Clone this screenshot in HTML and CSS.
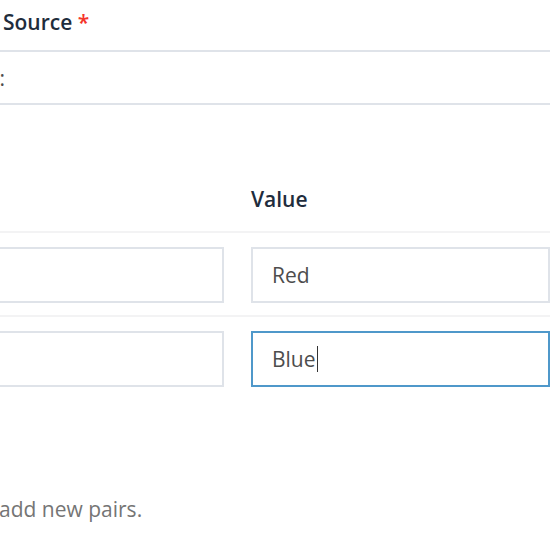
FILE: index.html
```html
<!DOCTYPE html>
<html lang="en">
<head>
  <meta charset="UTF-8">
  <meta name="viewport" content="width=device-width, initial-scale=1.0">
  <title>Source pairs</title>
  <link rel="stylesheet" href="styles.css">
</head>
<body>

  <form class="form">
    <div class="field">
      <label class="label" for="source">Source <span class="req">*</span></label>
      <input class="input source-input" id="source" type="text" value="Static:">
    </div>

    <div class="pairs">
      <div class="pairs-head">
        <div></div>
        <div>Value</div>
      </div>
      <div class="pair-row">
        <input class="input" type="text" value="">
        <input class="input" type="text" value="Red">
      </div>
      <div class="pair-row">
        <input class="input" type="text" value="">
        <!-- focused field, caret drawn so it shows in the capture -->
        <div class="input is-focused"><span>Blue</span><span class="caret"></span></div>
      </div>
    </div>

    <p class="hint">add new pairs.</p>
  </form>

</body>
</html>
```

FILE: styles.css
```css
* {
  box-sizing: border-box;
  margin: 0;
  padding: 0;
}

body {
  overflow: hidden;
  height: 100vh;
  background-color: #fff;
  font-family: "Open Sans", "Liberation Sans", sans-serif;
  font-size: 21px;
  color: #1f2d3d;
}

.form {
  padding-top: 8px;
}

.label {
  display: block;
  padding-left: 3px;
  line-height: 29px;
  font-weight: 600;
}

.req {
  color: #f5352b;
}

.input {
  display: block;
  height: 55px;
  padding: 0 19px;
  border: 2px solid #dfe3e9;
  border-radius: 0;
  background-color: #fff;
  font-family: inherit;
  font-size: 21px;
  font-weight: 500;
  color: #4d4d4d;
  outline: none;
}

.is-focused {
  display: flex;
  align-items: center;
  border-color: #4f98ca;
}

.caret {
  width: 1px;
  height: 26px;
  margin-left: 1px;
  background-color: #333;
}

.source-input {
  width: 640px;
  margin: 13px 0 0 -75px;
}

.pairs {
  width: 640px;
  margin: 80px 0 0 -75px;
}

.pairs-head,
.pair-row {
  display: grid;
  grid-template-columns: 299px 299px;
  column-gap: 27px;
}

.pairs-head {
  padding-bottom: 17px;
  line-height: 29px;
  font-weight: 600;
}

.pair-row {
  padding: 14px 0 12px;
  border-top: 2px solid #f3f3f4;
}

.pair-row .input {
  width: 100%;
  height: 56px;
}

.hint {
  margin: 96px 0 0 -1px;
  line-height: 29px;
  font-weight: 500;
  color: #757575;
}
```
